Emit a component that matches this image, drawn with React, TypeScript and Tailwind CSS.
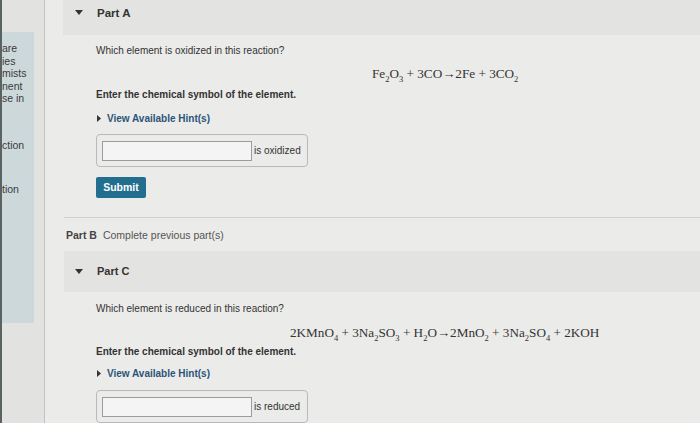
import React from 'react';

const S = ({ n }: { n: string }) => <sub className="text-[8.5px] align-[-1.5px]">{n}</sub>;

const Eq1 = () => (
  <span>
    Fe<S n="2" />O<S n="3" /> + 3CO→2Fe + 3CO<S n="2" />
  </span>
);

const Eq2 = () => (
  <span>
    2KMnO<S n="4" /> + 3Na<S n="2" />SO<S n="3" /> + H<S n="2" />O→2MnO<S n="2" /> + 3Na<S n="2" />SO<S n="4" /> + 2KOH
  </span>
);

const Caret = () => (
  <svg width="8" height="5" viewBox="0 0 8 5" className="shrink-0">
    <path d="M0 0 H8 L4 5 Z" fill="#333" />
  </svg>
);

const Hint = () => (
  <div className="flex items-center gap-[6px] h-[14px] font-bold text-[#2c5577] text-[10px]">
    <svg width="4" height="7" viewBox="0 0 4 7">
      <path d="M0 0 L4 3.5 L0 7 Z" fill="#333" />
    </svg>
    <span>View Available Hint(s)</span>
  </div>
);

const AnswerBox = ({ label }: { label: string }) => (
  <div className="w-[212px] h-[33px] border border-[#b9b9b9] rounded-[4px] flex items-center pl-[5px]">
    <div className="w-[150px] h-[20px] border border-[#9c9c9c] bg-[#f4f4f4]" />
    <span className="ml-[2px] text-[10px] text-[#333]">{label}</span>
  </div>
);

export default function App() {
  return (
    <div
      className="w-[700px] h-[423px] overflow-hidden flex bg-[#ebebea] text-[#333]"
      style={{ fontFamily: '"Liberation Sans", Arial, sans-serif' }}
    >
      {/* sidebar */}
      <div className="w-[45px] flex shrink-0 bg-[#e2e2e1] border-r border-[#c2c2c2]">
        <div className="w-[2px] bg-[#5b6262]" />
        <div className="flex flex-col">
          <div className="h-[32px]" />
          <div className="w-[32px] h-[291px] bg-[#cdd8da] overflow-hidden text-[10.5px] leading-[12.5px] text-[#3a3a3a] pt-[10px] whitespace-nowrap">
            <div>are</div>
            <div>ies</div>
            <div>mists</div>
            <div>nent</div>
            <div>se in</div>
            <div className="mt-[34px]">ction</div>
            <div className="mt-[32px]">tion</div>
          </div>
        </div>
      </div>

      {/* main */}
      <div className="flex-1 pl-[18px]">
        {/* Part A header */}
        <div className="h-[35px] bg-[#e3e3e2] flex items-start pt-[5px] pl-[12px]">
          <span className="mt-[5px]"><Caret /></span>
          <span className="ml-[14px] text-[11.5px] font-bold">Part A</span>
        </div>

        <div className="pl-[33px]">
          <div className="mt-[9px] h-[14px] text-[10px] leading-[14px]">Which element is oxidized in this reaction?</div>
          <div
            className="mt-[9px] pl-[276px] text-[13.2px] leading-[14px]"
            style={{ fontFamily: '"Liberation Serif", "Times New Roman", serif' }}
          >
            <Eq1 />
          </div>
          <div className="mt-[7px] h-[14px] text-[10px] leading-[14px] font-bold">Enter the chemical symbol of the element.</div>
          <div className="mt-[9px] pl-[1px]">
            <Hint />
          </div>
          <div className="mt-[9px]">
            <AnswerBox label="is oxidized" />
          </div>
          <button className="mt-[10px] w-[50px] h-[21px] bg-[#216e8f] rounded-[2px] text-white font-bold text-[10.5px]">
            Submit
          </button>
        </div>

        <div className="mt-[19px] border-t border-[#d0d0d0] ml-[1px]" />

        <div className="mt-[10px] pl-[3px] h-[14px] text-[10.5px] leading-[14px] flex">
          <span className="font-bold text-[#444]">Part B</span>
          <span className="ml-[6px] text-[#555]">Complete previous part(s)</span>
        </div>

        {/* Part C header */}
        <div className="mt-[9px] ml-[1px] h-[41px] bg-[#e3e3e2] flex items-center pl-[11px]">
          <Caret />
          <span className="ml-[14px] text-[11px] font-bold">Part C</span>
        </div>

        <div className="pl-[33px]">
          <div className="mt-[10px] h-[14px] text-[10px] leading-[14px]">Which element is reduced in this reaction?</div>
          <div
            className="mt-[10px] pl-[194px] text-[13.2px] leading-[14px]"
            style={{ fontFamily: '"Liberation Serif", "Times New Roman", serif' }}
          >
            <Eq2 />
          </div>
          <div className="mt-[5px] h-[14px] text-[10px] leading-[14px] font-bold">Enter the chemical symbol of the element.</div>
          <div className="mt-[7px] pl-[1px]">
            <Hint />
          </div>
          <div className="mt-[10px]">
            <AnswerBox label="is reduced" />
          </div>
        </div>
      </div>
    </div>
  );
}
